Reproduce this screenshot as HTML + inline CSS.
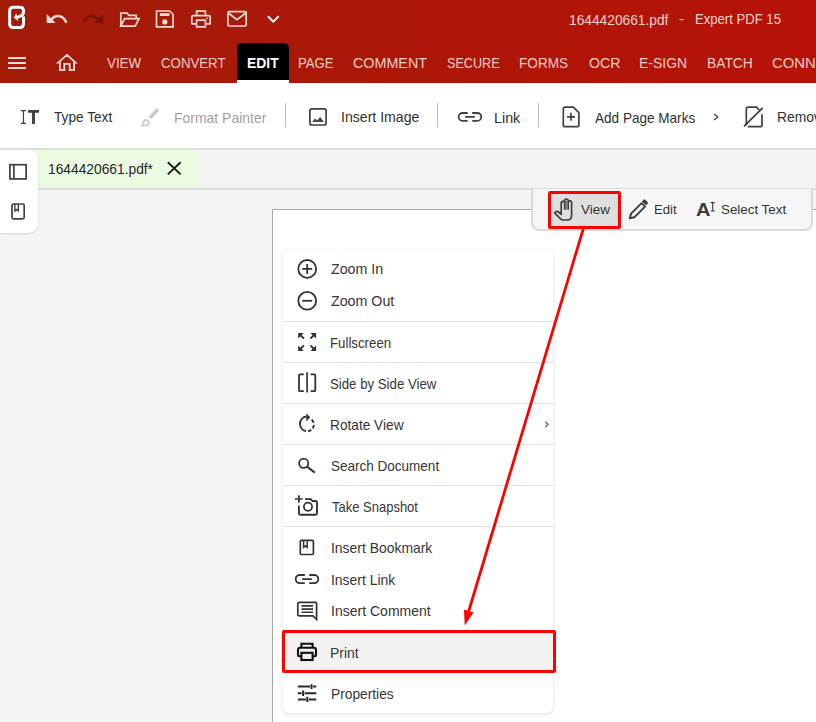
<!DOCTYPE html>
<html><head><meta charset="utf-8">
<style>
*{margin:0;padding:0;box-sizing:border-box}
html,body{width:816px;height:722px;overflow:hidden;background:#f4f4f4;font-family:"Liberation Sans",sans-serif}
.abs{position:absolute}
.t{position:absolute;white-space:nowrap;line-height:1;transform-origin:0 0}
#top{position:absolute;left:0;top:0;width:816px;height:83px;background:linear-gradient(90deg,#a21c08,#b81208)}
.ttl{top:13px;font-size:14.5px;color:#f4d2cc}
.menu{top:58px;font-size:14px;color:#f2cdc7}
#edit{position:absolute;left:237px;top:43px;width:52px;height:37px;background:#000;border-radius:5px 5px 0 0}
#tb{position:absolute;left:0;top:83px;width:816px;height:67px;background:#fff;border-bottom:2px solid #dedede}
.tl{top:111px;font-size:14px;color:#262626}
.sep{position:absolute;top:103px;width:1px;height:24px;background:#b9b9b9}
#tab{position:absolute;left:38px;top:150px;width:161px;height:38px;background:#eafbe2}
#tabline{position:absolute;left:0;top:188px;width:816px;height:2px;background:#dedede}
#side{position:absolute;left:0;top:150px;width:38px;height:83px;background:#fff;border-radius:0 9px 9px 0;box-shadow:0 1px 2px rgba(0,0,0,.15)}
#page{position:absolute;left:272px;top:209px;width:600px;height:600px;background:#fff;border-left:1px solid #a8a8a8;border-top:1px solid #a8a8a8}
#vt{position:absolute;left:531px;top:189px;width:282px;height:42px;background:#f5f5f5;border:2px solid #dcdcdc;border-top:none;border-radius:0 0 8px 8px}
.vl{top:205px;font-size:13.5px;color:#333}
#ctx{position:absolute;left:283px;top:249px;width:270px;height:464px;background:#fff;border-radius:6px;box-shadow:0 2px 5px rgba(0,0,0,.09),0 0 1px rgba(0,0,0,.14)}
.mi{left:331px;font-size:14px;color:#202020}
.hr{position:absolute;left:283px;width:270px;height:1px;background:#e2e2e2}
svg{position:absolute;overflow:visible}
</style></head><body>
<div id="top"></div>
<div id="edit"></div>
<div class="abs" style="left:237px;top:80px;width:52px;height:3px;background:#fff"></div>

<div id="tb"></div>
<div class="sep" style="left:285px"></div>
<div class="sep" style="left:437px"></div>
<div class="sep" style="left:538px"></div>

<div id="tab"></div>
<div id="tabline"></div>
<div id="side"></div>

<div id="page"></div>
<div id="vt"></div>
<div class="abs" style="left:550px;top:193px;width:69px;height:34px;background:#dfdfdf"></div>

<div id="ctx"></div>
<div class="hr" style="top:321px"></div>
<div class="hr" style="top:362px"></div>
<div class="hr" style="top:403px"></div>
<div class="hr" style="top:444px"></div>
<div class="hr" style="top:485px"></div>
<div class="hr" style="top:526px"></div>
<div class="abs" style="left:283px;top:632px;width:272px;height:40px;background:#f2f2f2"></div>

<div class="t" style="left:569.00px;top:12.00px;font-size:15px;color:#f4d2cc;transform:scaleX(0.9169);">1644420661.pdf</div>
<div class="t" style="left:679.00px;top:11.00px;font-size:15px;color:#f4d2cc;">-</div>
<div class="t" style="left:695.00px;top:11.00px;font-size:15px;color:#f4d2cc;transform:scaleX(0.8734);">Expert PDF 15</div>
<div class="t" style="left:107.00px;top:55.00px;font-size:15.5px;color:#f2cdc7;transform:scaleX(0.8620);">VIEW</div>
<div class="t" style="left:161.00px;top:55.00px;font-size:15.5px;color:#f2cdc7;transform:scaleX(0.8549);">CONVERT</div>
<div class="t" style="left:246.50px;top:55.00px;font-size:15.5px;color:#ffffff;font-weight:bold;transform:scaleX(0.8968);">EDIT</div>
<div class="t" style="left:297.50px;top:55.00px;font-size:15.5px;color:#f2cdc7;transform:scaleX(0.8468);">PAGE</div>
<div class="t" style="left:353.00px;top:55.00px;font-size:15.5px;color:#f2cdc7;transform:scaleX(0.9241);">COMMENT</div>
<div class="t" style="left:447.00px;top:55.00px;font-size:15.5px;color:#f2cdc7;transform:scaleX(0.8154);">SECURE</div>
<div class="t" style="left:518.50px;top:55.00px;font-size:15.5px;color:#f2cdc7;transform:scaleX(0.8784);">FORMS</div>
<div class="t" style="left:588.50px;top:55.00px;font-size:15.5px;color:#f2cdc7;transform:scaleX(0.9122);">OCR</div>
<div class="t" style="left:639.00px;top:55.00px;font-size:15.5px;color:#f2cdc7;transform:scaleX(0.9008);">E-SIGN</div>
<div class="t" style="left:706.50px;top:55.00px;font-size:15.5px;color:#f2cdc7;transform:scaleX(0.8911);">BATCH</div>
<div class="t" style="left:772.00px;top:55.00px;font-size:15.5px;color:#f2cdc7;transform:scaleX(0.9592);">CONN</div>
<div class="t" style="left:54.00px;top:110.00px;font-size:14.4px;color:#303030;transform:scaleX(0.9491);">Type Text</div>
<div class="t" style="left:174.00px;top:111.00px;font-size:14.4px;color:#a0a0a0;transform:scaleX(0.9705);">Format Painter</div>
<div class="t" style="left:341.00px;top:110.00px;font-size:14.4px;color:#303030;transform:scaleX(0.9803);">Insert Image</div>
<div class="t" style="left:494.00px;top:111.00px;font-size:14.4px;color:#303030;transform:scaleX(0.9951);">Link</div>
<div class="t" style="left:595.00px;top:111.00px;font-size:14.4px;color:#303030;transform:scaleX(0.9417);">Add Page Marks</div>
<div class="t" style="left:777.00px;top:110.00px;font-size:14.4px;color:#303030;transform:scaleX(0.9600);">Remove</div>
<div class="t" style="left:48.00px;top:162.00px;font-size:14.8px;color:#262626;transform:scaleX(0.9313);">1644420661.pdf*</div>
<div class="t" style="left:580.50px;top:203.00px;font-size:13.7px;color:#333333;transform:scaleX(0.9811);">View</div>
<div class="t" style="left:653.50px;top:203.00px;font-size:13.7px;color:#333333;transform:scaleX(0.9565);">Edit</div>
<div class="t" style="left:720.50px;top:203.00px;font-size:13.7px;color:#333333;transform:scaleX(0.9765);">Select Text</div>
<div class="t" style="left:696.00px;top:201.00px;font-size:18.5px;color:#3c3c3c;font-weight:bold;transform:scaleX(1.0833);">A</div>
<div class="t" style="left:331.00px;top:262.00px;font-size:14.5px;color:#363636;transform:scaleX(0.9808);">Zoom In</div>
<div class="t" style="left:331.00px;top:294.00px;font-size:14.5px;color:#363636;transform:scaleX(0.9820);">Zoom Out</div>
<div class="t" style="left:330.00px;top:336.00px;font-size:14.5px;color:#363636;transform:scaleX(0.9141);">Fullscreen</div>
<div class="t" style="left:330.00px;top:377.00px;font-size:14.5px;color:#363636;transform:scaleX(0.9119);">Side by Side View</div>
<div class="t" style="left:330.00px;top:418.00px;font-size:14.5px;color:#363636;transform:scaleX(0.9434);">Rotate View</div>
<div class="t" style="left:330.50px;top:459.00px;font-size:14.5px;color:#363636;transform:scaleX(0.9318);">Search Document</div>
<div class="t" style="left:331.50px;top:500.00px;font-size:14.5px;color:#363636;transform:scaleX(0.8959);">Take Snapshot</div>
<div class="t" style="left:330.50px;top:541.00px;font-size:14.5px;color:#363636;transform:scaleX(0.9598);">Insert Bookmark</div>
<div class="t" style="left:330.50px;top:573.00px;font-size:14.5px;color:#363636;transform:scaleX(0.9604);">Insert Link</div>
<div class="t" style="left:330.50px;top:604.00px;font-size:14.5px;color:#363636;transform:scaleX(0.9668);">Insert Comment</div>
<div class="t" style="left:330.00px;top:646.00px;font-size:14.5px;color:#363636;transform:scaleX(0.9611);">Print</div>
<div class="t" style="left:331.00px;top:687.00px;font-size:14.5px;color:#363636;transform:scaleX(0.9479);">Properties</div>
<svg width="816" height="722" style="left:0;top:0" fill="none" stroke-linecap="butt">
<g stroke="#f7d8d3" stroke-width="1.7">
<path d="M23.5,16.4 V23.8 Q23.5,27.5 19.8,27.5 H13.4 Q9.65,27.5 9.65,23.8 V10.9 Q9.65,7.2 13.4,7.2 H19.8 Q23.5,7.2 23.5,10.9 V12 Q23.5,15 20.2,16.2 L17.2,17.3" stroke="#fff" stroke-width="3"/>
<polygon points="13.9,17.7 16.2,13.2 18.4,21" fill="#fff" stroke="none"/>
<path d="M51.2,19.8 C55,14.6 62.6,13.8 66.4,22.8" stroke-width="2.5"/>
<polygon points="46.7,14 46.7,23.1 55.6,23.1" fill="#f7d8d3" stroke="none"/>
<path d="M98.6,19.8 C94.8,14.6 87.2,13.8 83.4,22.8" stroke="#7a1106" stroke-width="2.5"/>
<polygon points="103.1,14 103.1,23.1 94.2,23.1" fill="#7a1106" stroke="none"/>
<path d="M120.8,26.2 V13.2 H127 L129,15.3 H136.2 V18.6"/>
<path d="M120.8,26.2 L124.6,18.6 H139 L135.2,26.2 Z"/>
<path d="M156.5,11 H169.6 L173.1,14.5 V26.8 H156.5 Z"/>
<rect x="159.9" y="13.2" width="9.5" height="2.8" fill="#f7d8d3" stroke="none"/>
<circle cx="164.8" cy="21.9" r="2.6" fill="#f7d8d3" stroke="none"/>
<path d="M196.6,15.6 V11.2 H205.4 V15.6"/>
<path d="M196.6,23.8 H192.2 Q191.8,23.8 191.8,23.4 V17 Q191.8,15.6 193.2,15.6 H208.8 Q210.2,15.6 210.2,17 V23.4 Q210.2,23.8 209.8,23.8 H205.4"/>
<rect x="196.6" y="20.2" width="8.8" height="6.7"/>
<circle cx="207" cy="18.4" r=".8" fill="#f7d8d3" stroke="none"/>
<rect x="227.9" y="11.7" width="18.3" height="14.3" rx="1.2"/>
<path d="M228.3,13 L237,19.6 L245.8,13"/>
<path d="M267.9,16.3 L273.3,21.6 L278.7,16.3" stroke="#fff" stroke-width="2"/>
<path d="M8,57.9 H26 M8,62.9 H26 M8,67.9 H26" stroke-width="2"/>
<path d="M58.2,62.7 L67,54.9 L75.6,62.7 H74.1 V70.1 H69.7 V63.9 H64.3 V70.1 H59.9 V62.7 Z" stroke-width="1.8"/>
</g>
<g stroke="#404040" stroke-width="1.7">
<path d="M21,110.6 H25.9 M21,123.4 H25.9 M23.45,110.6 V123.4" stroke-width="1.2"/>
<path d="M28.1,111.4 H39 M33.5,111.4 V123.9" stroke-width="2.9"/>
<path d="M158,109.2 L149.8,118" stroke="#cccccc" stroke-width="3.8"/>
<path d="M142.3,125.4 Q143.3,124.6 143.4,122.8 A2.7,2.7 0 1 1 146,125.4 Z" stroke="#cccccc" stroke-width="1.9"/>
<rect x="309.9" y="108.9" width="16.2" height="16.1" rx="2"/>
<polygon points="312.2,121.9 315,118.4 317.3,120.6 320.2,117 323.9,121.9" fill="#404040" stroke="none"/>
<path d="M467.7,113 H462.5 A3.9,3.9 0 0 0 462.5,120.8 H467.7 M472.2,113 H477.4 A3.9,3.9 0 0 1 477.4,120.8 H472.2 M465.1,116.9 H474.8" stroke-width="1.8"/>
<path d="M573.3,107.1 H565 Q563.3,107.1 563.3,108.8 V125 Q563.3,126.7 565,126.7 H577.2 Q578.9,126.7 578.9,125 V112.7 Z"/>
<path d="M567,116.8 H575 M571,112.8 V120.8"/>
<path d="M746.3,125.4 V108.8 Q746.3,107.1 748,107.1 H756.6 L759.2,110 M762,114.2 V125 Q762,126.7 760.3,126.7 H747.8"/>
<path d="M743.9,126.3 L762.7,107.8"/>
<path d="M714,113.9 L717.8,117 L714,120.1" stroke-width="1.3"/>
<rect x="9.9" y="164.7" width="16.2" height="14.2"/>
<path d="M13.9,164.7 V178.9"/>
<rect x="12" y="204" width="12.2" height="14.9" rx="1.6"/>
<path d="M14.9,204 V211 L16.6,209.4 L18.3,211 V204" stroke-width="1.4"/>
<path d="M167.8,162.2 L180.6,174.4 M180.6,162.2 L167.8,174.4" stroke="#1a1a1a" stroke-width="1.9"/>
<path d="M561.2,214.4 V203.2 Q561.2,201.3 563,201.3 Q564.6,201.3 564.6,203 V200.9 Q564.6,199 566.4,199 Q568.2,199 568.2,200.9 V202.3 Q568.2,200.9 569.8,200.9 Q571.6,200.9 571.6,202.7 V215.5 Q571.6,220 567.3,220 H563.2 Q561.8,220 560.6,218.8 L554.6,212.9 Q556.3,210.6 558.5,212 Z" stroke="#3c3c3c" stroke-width="1.7" stroke-linejoin="round"/>
<path d="M564.6,203 V209.8 M568.2,202.3 V209.8" stroke="#3c3c3c" stroke-width="1.6"/>
<rect x="564.6" y="201" width="2.2" height="8.8" fill="#6a6a6a" stroke="none"/>
<path d="M629.8,218.3 L630.9,213.9 L641.6,203.2 L645,206.6 L634.3,217.3 Z" stroke="#3c3c3c" stroke-width="1.9" stroke-linejoin="round"/>
<path d="M641.9,201.4 L643.6,199.7 Q644.4,198.9 645.2,199.7 L647.6,202.1 Q648.4,202.9 647.6,203.7 L645.9,205.4 Z" fill="#3c3c3c" stroke="none"/>
<path d="M710.6,202.6 H714.8 M710.6,211 H714.8 M712.7,202.6 V211" stroke="#3c3c3c" stroke-width="1.1"/>
</g>
<g stroke="#333333" stroke-width="1.8">
<circle cx="307.2" cy="268.9" r="8.9"/>
<path d="M302.2,268.9 H312.2 M307.2,263.9 V273.9"/>
<circle cx="307.2" cy="300.8" r="8.9"/>
<path d="M302.2,300.8 H312.2"/>
<path d="M300.3,335 L303.9,338.6 M314,335 L310.4,338.6 M300.3,349 L303.9,345.4 M314,349 L310.4,345.4" stroke-width="1.9"/>
<polygon points="298.2,332.9 303.8,332.9 298.2,338.5" fill="#333" stroke="none"/>
<polygon points="316.1,332.9 310.5,332.9 316.1,338.5" fill="#333" stroke="none"/>
<polygon points="298.2,351 303.8,351 298.2,345.4" fill="#333" stroke="none"/>
<polygon points="316.1,351 310.5,351 316.1,345.4" fill="#333" stroke="none"/>
<path d="M303.8,374.3 H300 Q299,374.3 299,375.3 V390.2 Q299,391.2 300,391.2 H303.8 M310.6,374.3 H314.3 Q315.3,374.3 315.3,375.3 V390.2 Q315.3,391.2 314.3,391.2 H310.6" stroke-width="1.8"/>
<path d="M307.1,372.2 V392.6" stroke-width="1.7"/>
<path d="M306.6,416.6 A7.4,7.4 0 0 0 305.9,431.2" stroke-width="2"/>
<polygon points="306.3,413.2 310.2,417.2 306.3,421.6" fill="#333" stroke="none"/>
<path d="M311.8,419.4 L313.8,422.7 M314,425 L312.8,428.4 M311.3,430 L308.2,431.3" stroke-width="1.9"/>
<circle cx="303.7" cy="463.3" r="4.6"/>
<path d="M307,466.6 L314.8,472.6" stroke-width="2"/>
<path d="M295,499 H302.7 M298.9,495.3 V502.7" stroke-width="1.7"/>
<path d="M298.9,505.4 V513.3 Q298.9,514.8 300.4,514.8 H315.5 Q317,514.8 317,513.3 V502.5 Q317,501 315.5,501 H312.4 L310.6,499.1 H305.1" stroke-width="1.9"/>
<circle cx="308" cy="506.8" r="4.1" stroke-width="1.7"/>
<path d="M300.3,553.6 V541.6 Q300.3,540.4 301.5,540.4 H312.2 Q313.4,540.4 313.4,541.6 V553.3 Q313.4,554.5 312.2,554.5 H301.5 Q300.3,554.5 300.3,553.3 Z" stroke-width="1.7"/>
<path d="M303.6,540.4 V547.3 L305.4,545.8 L307.2,547.3 V540.4" stroke-width="1.5"/>
<path d="M304.8,575 H299.8 A4.1,4.1 0 0 0 299.8,583.2 H304.8 M309.2,575 H314.2 A4.1,4.1 0 0 1 314.2,583.2 H309.2 M302.2,579.1 H311.8"/>
<path d="M298.9,602.3 H315.5 Q316.6,602.3 316.6,603.6 V619.5 L313,615.9 H299 Q297.8,615.9 297.8,614.6 V603.6 Q297.8,602.3 299,602.3 Z" stroke-width="1.7"/>
<path d="M301.5,605.9 H313 M301.5,609.1 H313 M301.5,612.2 H313" stroke-width="1.6"/>
<g stroke="#111" stroke-width="2.1">
<path d="M301.4,647.6 V643.7 H312.6 V647.6"/>
<path d="M301.4,656.2 H299.3 Q298,656.2 298,654.9 V650 Q298,647.8 300.2,647.8 H313.8 Q316,647.8 316,650 V654.9 Q316,656.2 314.7,656.2 H312.6"/>
<rect x="301.4" y="652.8" width="11.2" height="7.2"/>
</g>
<path d="M297.9,686.4 H310 M313,686.4 H316.3 M297.9,693.2 H301.6 M304.6,693.2 H316.3 M297.9,699.4 H305.8 M308.8,699.4 H316.3" stroke-width="2" stroke="#2a2a2a"/>
<path d="M311.5,684.2 V689 M303.1,690.6 V696 M307.3,696.8 V702" stroke-width="2" stroke="#2a2a2a"/>
<path d="M545.5,421.6 L548,424.3 L545.5,427" stroke="#555" stroke-width="1.2"/>
</g>
</svg>

<!-- red annotations -->
<div class="abs" style="left:548px;top:191px;width:73px;height:38px;border:3px solid #ff0000;border-radius:2px"></div>
<div class="abs" style="left:282px;top:630px;width:274px;height:43px;border:3px solid #ff0000;border-radius:2px"></div>
<svg width="816" height="722" style="left:0;top:0">
<line x1="583.5" y1="228" x2="468.5" y2="612" stroke="#ff0000" stroke-width="2.8"/>
<polygon points="464.7,625.5 464,609.5 473.5,612.5" fill="#ff0000"/>
</svg>
</body></html>
